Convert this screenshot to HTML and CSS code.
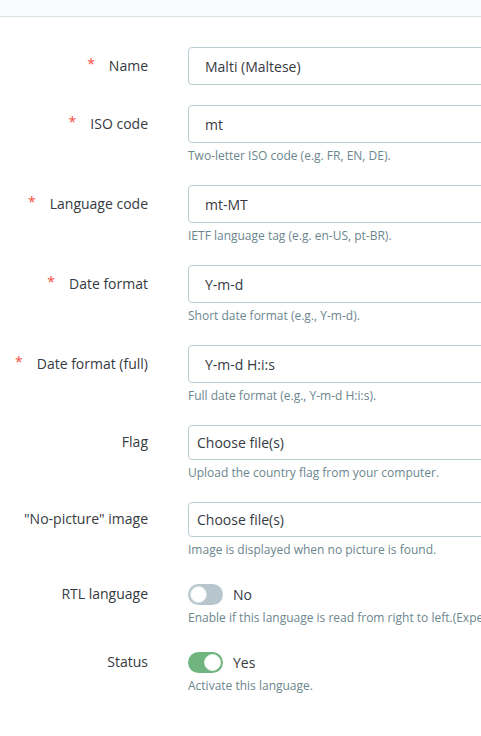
FILE: index.html
```html
<!DOCTYPE html>
<html lang="en">
<head>
<meta charset="utf-8">
<title>Language</title>
<link rel="stylesheet" href="styles.css">
</head>
<body>
<div class="topbar"></div>
<form class="form">
  <div class="row">
    <label class="label"><span class="req">*</span>Name</label>
    <div class="input">Malti (Maltese)</div>
  </div>
  <div class="row">
    <label class="label"><span class="req">*</span>ISO code</label>
    <div class="input">mt</div>
    <div class="help">Two-letter ISO code (e.g. FR, EN, DE).</div>
  </div>
  <div class="row">
    <label class="label"><span class="req">*</span>Language code</label>
    <div class="input">mt-MT</div>
    <div class="help">IETF language tag (e.g. en-US, pt-BR).</div>
  </div>
  <div class="row">
    <label class="label"><span class="req">*</span>Date format</label>
    <div class="input">Y-m-d</div>
    <div class="help">Short date format (e.g., Y-m-d).</div>
  </div>
  <div class="row">
    <label class="label"><span class="req">*</span>Date format (full)</label>
    <div class="input">Y-m-d H:i:s</div>
    <div class="help">Full date format (e.g., Y-m-d H:i:s).</div>
  </div>
  <div class="row">
    <label class="label">Flag</label>
    <div class="file">Choose file(s)</div>
    <div class="help">Upload the country flag from your computer.</div>
  </div>
  <div class="row">
    <label class="label">"No-picture" image</label>
    <div class="file">Choose file(s)</div>
    <div class="help">Image is displayed when no picture is found.</div>
  </div>
  <div class="row">
    <label class="label">RTL language</label>
    <div class="switch-wrap"><span class="switch"><span class="knob"></span></span><span class="switch-text">No</span></div>
    <div class="help help-switch">Enable if this language is read from right to left.(Experimental: the feature is not fully supported yet)</div>
  </div>
  <div class="row">
    <label class="label">Status</label>
    <div class="switch-wrap"><span class="switch on"><span class="knob"></span></span><span class="switch-text">Yes</span></div>
    <div class="help help-switch">Activate this language.</div>
  </div>
</form>
</body>
</html>
```

FILE: styles.css
```css
html, body {
  margin: 0;
  padding: 0;
  overflow: hidden;
  background: #ffffff;
}
body {
  font-family: "Open Sans", "DejaVu Sans", sans-serif;
  font-size: 14px;
  color: #363a41;
  width: 481px;
  height: 736px;
}
.topbar {
  height: 16px;
  background: #fafbfc;
  border-bottom: 1px solid #d9e4e8;
}
.form {
  padding-top: 30px;
}
.row {
  display: grid;
  grid-template-columns: 148px 420px;
  column-gap: 40px;
  margin-bottom: 20px;
}
.label {
  grid-column: 1;
  grid-row: 1;
  display: flex;
  align-items: center;
  justify-content: flex-end;
  white-space: nowrap;
  color: #363a41;
  padding-bottom: 2px;
}
.req {
  color: #f54c3e;
  margin-right: 14px;
  position: relative;
  top: -2px;
}
.input, .file {
  grid-column: 2;
  grid-row: 1;
  box-sizing: border-box;
  border: 1px solid #bbcdd2;
  border-radius: 4px;
  background: #fff;
  display: flex;
  align-items: center;
  white-space: nowrap;
}
.input {
  height: 38px;
  padding: 0 16px;
}
.file {
  height: 35px;
  padding: 0 8px;
}
.help {
  grid-column: 2;
  grid-row: 2;
  margin-top: 4px;
  font-size: 12px;
  line-height: 18px;
  color: #6c868e;
  white-space: nowrap;
}
.help-switch {
  margin-top: 0;
}
.switch-wrap {
  grid-column: 2;
  grid-row: 1;
  height: 30px;
  display: flex;
  align-items: center;
}
.switch {
  position: relative;
  width: 35px;
  height: 21px;
  border-radius: 11px;
  background: #b7c6cc;
  flex: none;
}
.switch .knob {
  position: absolute;
  top: 2px;
  left: 2px;
  width: 17px;
  height: 17px;
  border-radius: 50%;
  background: #fff;
  box-sizing: border-box;
  border: 1px solid #dfe7ea;
}
.switch.on {
  background: #70b580;
}
.switch.on .knob {
  left: 16px;
  border-color: #e4f1e7;
}
.switch-text {
  margin-left: 10px;
  font-size: 14px;
}
```
